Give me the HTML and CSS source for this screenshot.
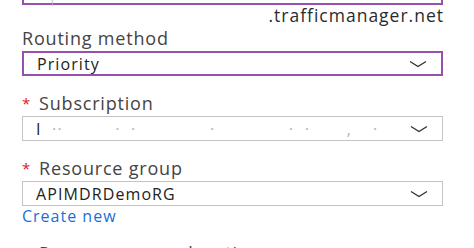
FILE: index.html
```html
<!DOCTYPE html>
<html lang="en">
<head>
<meta charset="utf-8">
<title>Traffic Manager profile</title>
<link rel="stylesheet" href="styles.css">
</head>
<body>
<div class="form">
  <div class="box box-active box-top"><span class="caret-mark">|</span></div>
  <div class="suffix">.trafficmanager.net</div>

  <div class="field">
    <div class="label">Routing method</div>
    <div class="box box-active">
      <span class="value">Priority</span>
      <svg class="chev" viewBox="0 0 18 8" width="18" height="8"><path d="M1 1.5 L9 6.5 L17 1.5" fill="none" stroke="#333" stroke-width="1.4"/></svg>
    </div>
  </div>

  <div class="field">
    <div class="label"><span class="req">*</span>Subscription</div>
    <div class="box">
      <span class="value redacted">I<span class="specks">  ··          ·  ·              ·              ·  ·       ,    ·</span></span>
      <svg class="chev" viewBox="0 0 18 8" width="18" height="8"><path d="M1 1.5 L9 6.5 L17 1.5" fill="none" stroke="#333" stroke-width="1.4"/></svg>
    </div>
  </div>

  <div class="field">
    <div class="label"><span class="req">*</span>Resource group</div>
    <div class="box">
      <span class="value">APIMDRDemoRG</span>
      <svg class="chev" viewBox="0 0 18 8" width="18" height="8"><path d="M1 1.5 L9 6.5 L17 1.5" fill="none" stroke="#333" stroke-width="1.4"/></svg>
    </div>
    <a class="link" href="#">Create new</a>
  </div>

  <div class="field field-last">
    <div class="label"><span class="req">*</span>Resource group location <span class="info">i</span></div>
  </div>
</div>
</body>
</html>
```

FILE: styles.css
```css
html, body {
  margin: 0;
  padding: 0;
  background: #ffffff;
  overflow: hidden;
}

body {
  width: 474px;
  height: 248px;
  font-family: "Open Sans", "Noto Sans", sans-serif;
  color: #3b3b3b;
}

.form {
  width: 421px;
  padding-left: 22px;
}

.box {
  box-sizing: border-box;
  height: 25px;
  border: 1.5px solid #c4c4c4;
  display: flex;
  align-items: center;
  justify-content: space-between;
  padding: 0 12px 0 13px;
  background: #fff;
}

.box-active {
  border: 2px solid #9650ad;
}

.box-top {
  margin-top: -21px;
  height: 26px;
}

.caret-mark {
  color: #b9b9b9;
  font-size: 12px;
  line-height: 12px;
  margin-top: 14px;
  margin-left: 12px;
}

.suffix {
  text-align: right;
  font-size: 17.5px;
  line-height: 20px;
  letter-spacing: 1px;
  color: #2b2b2b;
  margin-right: -1px;
}

.field {
  margin-top: 2px;
}

.field + .field {
  margin-top: 16px;
}

.field + .field-last {
  margin-top: 16px;
}

.label {
  font-size: 18px;
  line-height: 22px;
  letter-spacing: 0.8px;
  color: #444;
  margin-bottom: 2px;
  white-space: nowrap;
}

.req {
  color: #e0182a;
  font-size: 15px;
  margin-right: 8px;
  vertical-align: 1px;
}

.value {
  font-size: 16px;
  letter-spacing: 1.1px;
  color: #222;
  white-space: pre;
}

.redacted .specks {
  color: #b5b5b5;
}

.chev {
  display: block;
  margin-right: 2px;
}

.link {
  display: block;
  font-size: 16px;
  line-height: 20px;
  letter-spacing: 1px;
  color: #1a6fd6;
  text-decoration: none;
  margin-top: 0;
}

.info {
  display: inline-block;
  width: 12px;
  height: 12px;
  border: 1px solid #777;
  border-radius: 50%;
  font-size: 10px;
  line-height: 12px;
  text-align: center;
}
```
